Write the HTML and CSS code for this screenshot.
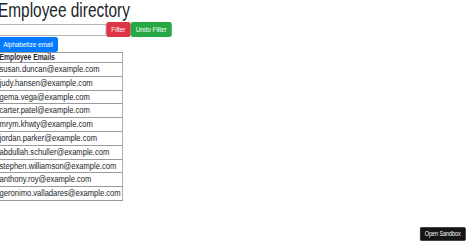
FILE: index.html
```html
<!DOCTYPE html>
<html lang="en">
<head>
  <meta charset="UTF-8" />
  <meta name="viewport" content="width=device-width, initial-scale=1.0"/>
  <title>Employee directory</title>
  <link rel="stylesheet" href="styles.css">
</head>
<body>

  <div class="page">
    <h1>Employee directory</h1>

    <!-- Filter controls -->
    <div class="filter-row">
      <input type="text" class="filter-input" />
      <button class="btn btn-danger">Filter</button>
      <button class="btn btn-success">Undo Filter</button>
    </div>
    <button class="btn btn-primary">Alphabetize email</button>

    <!-- Email list -->
    <table class="email-table">
      <thead>
        <tr><th>Employee Emails</th></tr>
      </thead>
      <tbody>
        <tr><td>susan.duncan@example.com</td></tr>
        <tr><td>judy.hansen@example.com</td></tr>
        <tr><td>gema.vega@example.com</td></tr>
        <tr><td>carter.patel@example.com</td></tr>
        <tr><td>mrym.khwty@example.com</td></tr>
        <tr><td>jordan.parker@example.com</td></tr>
        <tr><td>abdullah.schuller@example.com</td></tr>
        <tr><td>stephen.williamson@example.com</td></tr>
        <tr><td>anthony.roy@example.com</td></tr>
        <tr><td>geronimo.valladares@example.com</td></tr>
      </tbody>
    </table>
  </div>

  <button class="sandbox-btn">Open Sandbox</button>

</body>
</html>
```

FILE: styles.css
```css
body {
  font-family: "Liberation Sans", Arial, sans-serif;
  margin: 0;
  background-color: #fff;
  color: #212529;
  overflow: hidden;
}
.page {
  margin-left: -2px;
  transform: scaleX(0.79);
  transform-origin: 0 0;
}
h1 {
  font-size: 19.5px;
  font-weight: 400;
  line-height: 21px;
  margin: 0 0 1px 0;
}
.filter-row {
  display: flex;
  align-items: center;
}
.filter-input {
  width: 137px;
  height: 12px;
  box-sizing: border-box;
  margin: 0;
  padding: 0 2px;
  border: 1px solid #b5b5b5;
  font-size: 8px;
}
.btn {
  font-family: inherit;
  font-size: 8px;
  line-height: 9px;
  padding: 3px 6.5px;
  margin: 0;
  border: none;
  border-radius: 3px;
  color: white;
  cursor: pointer;
}
.btn-danger {
  background-color: #dc3545;
}
.btn-success {
  background-color: #28a745;
}
.btn-primary {
  background-color: #007bff;
  padding: 3px 6.5px;
  display: block;
}
.btn:hover {
  opacity: 0.8;
}
.email-table {
  border-collapse: collapse;
}
.email-table th, .email-table td {
  border: 1px solid #999;
  padding: 0 2px 0 1px;
  text-align: left;
  white-space: nowrap;
}
.email-table th {
  font-size: 8.5px;
  line-height: 9px;
  font-weight: bold;
}
.email-table td {
  font-size: 9.6px;
  line-height: 12.8px;
}
.sandbox-btn {
  position: fixed;
  right: 8px;
  bottom: 7px;
  transform: scaleX(0.77);
  transform-origin: right bottom;
  font-family: inherit;
  font-size: 7px;
  line-height: 8px;
  padding: 2px 5.5px;
  border: 1px solid #3a3a3a;
  border-radius: 2px;
  background: #151515;
  color: #fff;
}
```
